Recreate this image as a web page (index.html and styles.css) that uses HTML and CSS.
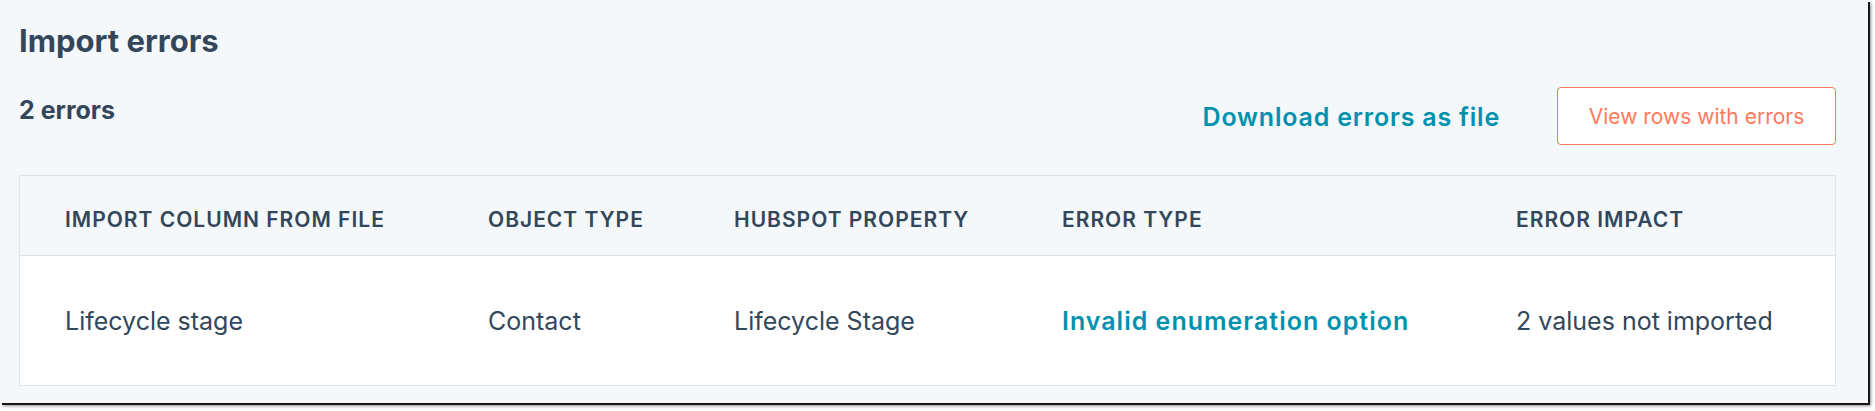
FILE: index.html
```html
<!DOCTYPE html>
<html lang="en">
<head>
<meta charset="utf-8">
<title>Import errors</title>
<link rel="stylesheet" href="styles.css">
</head>
<body>
<div class="page">
  <div class="window">
    <h2 class="title">Import errors</h2>
    <div class="summary">
      <h3 class="count">2 errors</h3>
      <div class="actions">
        <a class="link-download" href="#">Download errors as file</a>
        <button class="btn-secondary" type="button">View rows with errors</button>
      </div>
    </div>
    <div class="table" role="table">
      <div class="row head" role="row">
        <div class="th c1" role="columnheader">IMPORT COLUMN FROM FILE</div>
        <div class="th" role="columnheader">OBJECT TYPE</div>
        <div class="th" role="columnheader">HUBSPOT PROPERTY</div>
        <div class="th" role="columnheader">ERROR TYPE</div>
        <div class="th" role="columnheader">ERROR IMPACT</div>
      </div>
      <div class="row body" role="row">
        <div class="td c1" role="cell">Lifecycle stage</div>
        <div class="td" role="cell">Contact</div>
        <div class="td" role="cell">Lifecycle Stage</div>
        <div class="td" role="cell"><a class="link-error" href="#">Invalid enumeration option</a></div>
        <div class="td" role="cell">2 values not imported</div>
      </div>
    </div>
  </div>
</div>
</body>
</html>
```

FILE: styles.css
```css
* { box-sizing: border-box; }

html, body {
  margin: 0;
  background: #ffffff;
}

body {
  font-family: Inter, "Noto Sans", sans-serif;
  color: #33475b;
}

.page {
  width: 1875px;
  height: 411px;
  padding: 0 7px 8px 0;
}

.window {
  width: 1868px;
  height: 403px;
  background: #f5f8fa;
  padding: 22px 32px 0 19px;
  box-shadow: 2px 2px 0 #161616, 3px 3px 3px rgba(0, 0, 0, 0.45);
}

.title {
  margin: 0 0 27px;
  font-size: 31px;
  line-height: 38px;
  font-weight: 700;
}

.summary {
  display: flex;
  justify-content: space-between;
  align-items: flex-start;
  margin-bottom: 30px;
}

.count {
  margin: 8px 0 0;
  font-size: 25px;
  line-height: 30px;
  font-weight: 700;
}

.actions {
  display: flex;
  align-items: center;
  gap: 57px;
}

.link-download {
  color: #0091ae;
  font-size: 25px;
  font-weight: 600;
  letter-spacing: 0.8px;
  text-decoration: none;
  line-height: 30px;
  padding-top: 2px;
}

.btn-secondary {
  width: 279px;
  height: 58px;
  background: #ffffff;
  border: 1px solid #ff7a59;
  border-radius: 4px;
  color: #ff7a59;
  font-family: Inter, "Noto Sans", sans-serif;
  font-size: 21px;
  font-weight: 400;
  padding: 0;
}

.table {
  border: 1px solid #dfe3eb;
  background: #ffffff;
}

.row {
  display: grid;
  grid-template-columns: 468px 246px 328px 454px 1fr;
}

.row.head {
  background: #f5f8fa;
  border-bottom: 1px solid #dfe3eb;
}

.th {
  padding: 31px 0 23px;
  font-size: 21px;
  line-height: 25px;
  font-weight: 600;
  letter-spacing: 1px;
  white-space: nowrap;
}

.td {
  padding: 50px 0 49px;
  font-size: 25px;
  line-height: 30px;
  white-space: nowrap;
}

.c1 { padding-left: 45px; }

.link-error {
  color: #0091ae;
  font-weight: 600;
  letter-spacing: 1px;
  text-decoration: none;
}
```
